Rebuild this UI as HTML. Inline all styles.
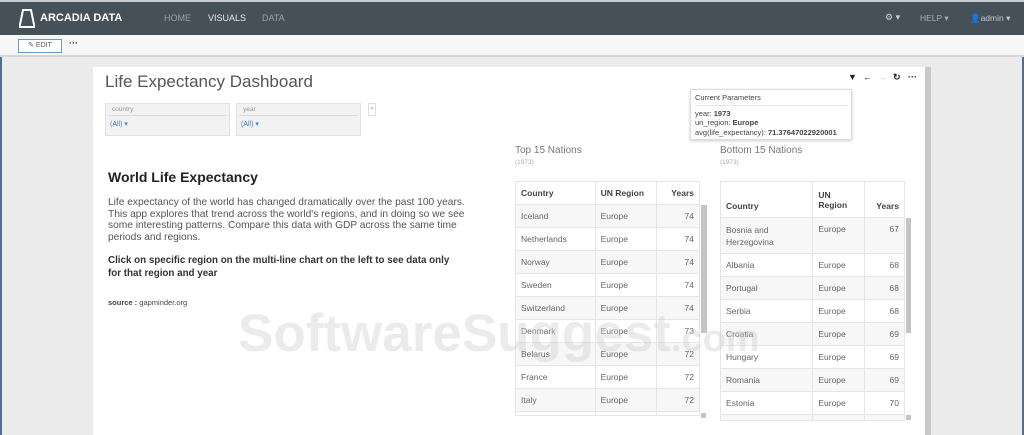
<!DOCTYPE html>
<html><head><meta charset="utf-8"><style>
*{box-sizing:border-box;margin:0;padding:0}
body{width:1024px;height:435px;overflow:hidden;background:#ebebeb;font-family:"Liberation Sans",sans-serif;position:relative}
.abs{position:absolute}
.nav{left:0;top:0;width:1024px;height:35px;background:#465058;border-top:2px solid #c9ccce}
.tb{left:0;top:35px;width:1024px;height:22px;background:#f6f6f6;border-bottom:2px solid #d6d6d6}
.card{left:93px;top:67px;width:832px;height:368px;background:#fff}
table{border-collapse:collapse;font-size:8.5px;color:#666;position:absolute}
td,th{border:1px solid #e6e6e6;padding:0 5px;text-align:left;vertical-align:middle}
th{color:#444;font-weight:bold;background:#fff}
tr:nth-child(even) td{background:#f7f7f7}
td.n,th.n{text-align:right}
</style></head><body>
<div class="abs" style="left:0;top:35px;width:2px;height:400px;background:#4d6e8e"></div>
<div class="abs" style="right:0;top:35px;width:2px;height:400px;background:#4d6e8e"></div>
<div class="abs nav">
<svg class="abs" style="left:19px;top:7px" width="16" height="19" viewBox="0 0 16 19"><path d="M4 1h8l3.5 17H.5z" fill="none" stroke="#fff" stroke-width="2"/></svg>
<div class="abs" style="left:40px;top:10px;color:#fff;font-weight:bold;font-size:11px">ARCADIA DATA</div>
<div class="abs" style="left:164px;top:11px;color:#9aa1a6;font-size:9px">HOME</div>
<div class="abs" style="left:208px;top:11px;color:#e6e8ea;font-size:9px">VISUALS</div>
<div class="abs" style="left:198px;top:33px;width:54px;height:3px;background:#8a9096"></div>
<div class="abs" style="left:262px;top:11px;color:#9aa1a6;font-size:9px">DATA</div>
<div class="abs" style="left:885px;top:10px;color:#cfd3d6;font-size:9px">⚙ ▾</div>
<div class="abs" style="left:920px;top:11px;color:#aab0b5;font-size:8.5px">HELP ▾</div>
<div class="abs" style="left:970px;top:11px;color:#c4c9cd;font-size:8.5px">👤admin ▾</div>
</div>
<div class="abs tb">
<div class="abs" style="left:18px;top:4px;width:44px;height:14px;border:1px solid #6e98c2;background:#fff;font-size:7px;color:#555;text-align:center;line-height:12px">✎ EDIT</div>
<div class="abs" style="left:69px;top:3px;font-size:9px;color:#333;font-weight:bold">···</div>
</div>
<div class="abs" style="left:925px;top:67px;width:6px;height:368px;background:#c8c8c8"></div>
<div class="abs card"></div>
<div class="abs" style="left:105px;top:72px;font-size:17px;color:#555">Life Expectancy Dashboard</div>
<div class="abs" style="left:105px;top:103px;width:125px;height:33px;background:#f2f2f2;border:1px solid #e2e2e2">
<div style="font-size:6.5px;color:#999;padding:2px 4px;border-bottom:1px solid #ddd;margin:0 2px">country</div>
<div style="font-size:7px;color:#3d7fc1;padding:4px 4px">(All) ▾</div></div>
<div class="abs" style="left:236px;top:103px;width:125px;height:33px;background:#f2f2f2;border:1px solid #e2e2e2">
<div style="font-size:6.5px;color:#999;padding:2px 4px;border-bottom:1px solid #ddd;margin:0 2px">year</div>
<div style="font-size:7px;color:#3d7fc1;padding:4px 4px">(All) ▾</div></div>
<div class="abs" style="left:368px;top:103px;width:8px;height:13px;border:1px solid #ddd;font-size:6px;color:#999;text-align:center;line-height:11px">«</div>
<div class="abs" style="left:848px;top:72px;font-size:9px;color:#222;font-weight:bold;white-space:nowrap">
<span class="abs" style="left:0">▼</span><span class="abs" style="left:15px">←</span><span class="abs" style="left:30px;color:#ccc">→</span><span class="abs" style="left:45px">↻</span><span class="abs" style="left:60px">···</span></div>
<div class="abs" style="left:690px;top:89px;width:162px;height:51px;background:#fff;border:1px solid #ddd;box-shadow:0 1px 3px rgba(0,0,0,.2);font-size:7.5px;color:#444;padding:3px 4px;line-height:9.5px">
<div style="border-bottom:1px solid #e4e4e4;padding-bottom:2px;margin-bottom:3px">Current Parameters</div>
year: <b>1973</b><br>un_region: <b>Europe</b><br>avg(life_expectancy): <b>71.37647022920001</b></div>
<div class="abs" style="left:108px;top:169px;font-size:14px;font-weight:bold;color:#222">World Life Expectancy</div>
<div class="abs" style="left:108px;top:197px;width:362px;font-size:10.2px;color:#555;line-height:11.5px">Life expectancy of the world has changed dramatically over the past 100 years. This app explores that trend across the world's regions, and in doing so we see some interesting patterns. Compare this data with GDP across the same time periods and regions.</div>
<div class="abs" style="left:108px;top:255px;width:355px;font-size:9.8px;color:#333;font-weight:bold;line-height:12.5px">Click on specific region on the multi-line chart on the left to see data only for that region and year</div>
<div class="abs" style="left:108px;top:298px;font-size:7.5px;color:#444"><b>source :</b> gapminder.org</div>
<div class="abs" style="left:515px;top:145px;font-size:10px;color:#777">Top 15 Nations</div>
<div class="abs" style="left:515px;top:159px;font-size:6.5px;color:#aaa">(1973)</div>
<div class="abs" style="left:720px;top:145px;font-size:10px;color:#777">Bottom 15 Nations</div>
<div class="abs" style="left:720px;top:159px;font-size:6.5px;color:#aaa">(1973)</div>
<table style="left:515px;top:181px;width:185px">
<colgroup><col style="width:80px"><col style="width:62px"><col style="width:43px"></colgroup>
<tr style="height:23px"><th>Country</th><th>UN Region</th><th class="n">Years</th></tr>
<tr style="height:23px"><td>Iceland</td><td>Europe</td><td class="n">74</td></tr>
<tr style="height:23px"><td>Netherlands</td><td>Europe</td><td class="n">74</td></tr>
<tr style="height:23px"><td>Norway</td><td>Europe</td><td class="n">74</td></tr>
<tr style="height:23px"><td>Sweden</td><td>Europe</td><td class="n">74</td></tr>
<tr style="height:23px"><td>Switzerland</td><td>Europe</td><td class="n">74</td></tr>
<tr style="height:23px"><td>Denmark</td><td>Europe</td><td class="n">73</td></tr>
<tr style="height:23px"><td>Belarus</td><td>Europe</td><td class="n">72</td></tr>
<tr style="height:23px"><td>France</td><td>Europe</td><td class="n">72</td></tr>
<tr style="height:23px"><td>Italy</td><td>Europe</td><td class="n">72</td></tr>
<tr style="height:4px"><td></td><td></td><td></td></tr>
</table>
<div class="abs" style="left:701px;top:205px;width:6px;height:128px;background:#c4c4c4"></div>
<div class="abs" style="left:701px;top:413px;width:5px;height:5px;background:#c4c4c4"></div>
<table style="left:720px;top:181px;width:185px">
<colgroup><col style="width:93px"><col style="width:52px"><col style="width:40px"></colgroup>
<tr style="height:36px"><th style="vertical-align:bottom;padding-bottom:6px">Country</th><th>UN<br>Region</th><th class="n" style="vertical-align:bottom;padding-bottom:6px">Years</th></tr>
<tr style="height:36px"><td style="vertical-align:top;padding-top:6px;line-height:12px">Bosnia and Herzegovina</td><td style="vertical-align:top;padding-top:6px">Europe</td><td class="n" style="vertical-align:top;padding-top:6px">67</td></tr>
<tr style="height:23px"><td>Albania</td><td>Europe</td><td class="n">68</td></tr>
<tr style="height:23px"><td>Portugal</td><td>Europe</td><td class="n">68</td></tr>
<tr style="height:23px"><td>Serbia</td><td>Europe</td><td class="n">68</td></tr>
<tr style="height:23px"><td>Croatia</td><td>Europe</td><td class="n">69</td></tr>
<tr style="height:23px"><td>Hungary</td><td>Europe</td><td class="n">69</td></tr>
<tr style="height:23px"><td>Romania</td><td>Europe</td><td class="n">69</td></tr>
<tr style="height:23px"><td>Estonia</td><td>Europe</td><td class="n">70</td></tr>
<tr style="height:6px"><td></td><td></td><td></td></tr>
</table>
<div class="abs" style="left:906px;top:218px;width:5px;height:115px;background:#c4c4c4"></div>
<div class="abs" style="left:906px;top:415px;width:5px;height:5px;background:#c4c4c4"></div>
<div class="abs" style="left:238px;top:303px;font-size:53px;font-weight:bold;color:rgba(205,205,205,.4);letter-spacing:0;white-space:nowrap">SoftwareSuggest<span style="font-size:38px">.com</span></div>
</body></html>
